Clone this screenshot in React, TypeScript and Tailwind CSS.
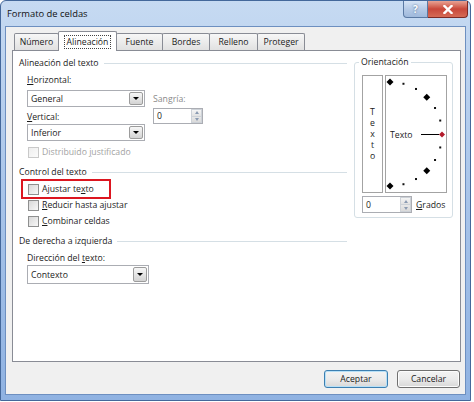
import type { ReactNode } from "react";

type TabProps = { label: string; className: string; active?: boolean };

function Tab({ label, className, active }: TabProps) {
  if (active) {
    return (
      <div
        className={`relative z-10 -mb-px -ml-px flex h-[20px] items-center justify-center rounded-t-[2px] border border-b-0 border-[#898c95] bg-white ${className}`}
      >
        <span className="border border-dotted border-[#444] px-[2px] leading-[12px]">{label}</span>
      </div>
    );
  }
  return (
    <div
      className={`-ml-px flex h-[17px] items-center justify-center rounded-t-[2px] border border-b-0 border-[#898c95] bg-gradient-to-b from-[#f7f7f7] to-[#e1e1e1] first:ml-0 ${className}`}
    >
      {label}
    </div>
  );
}

function Section({ title }: { title: string }) {
  return (
    <div className="flex h-[12px] items-center">
      <span className="whitespace-nowrap">{title}</span>
      <div className="ml-[5px] h-px flex-1 bg-[#d5dfe5]" />
    </div>
  );
}

function Select({ value, className }: { value: string; className: string }) {
  return (
    <div className={`flex border border-[#abadb3] bg-white p-px ${className}`}>
      <span className="flex flex-1 items-center pl-[2px]">{value}</span>
      <div className="flex w-[14px] items-center justify-center rounded-[2px] border border-[#9c9c9c] bg-gradient-to-b from-[#f7f7f7] to-[#d3d3d3]">
        <div className="h-0 w-0 border-x-[3px] border-t-[3px] border-x-transparent border-t-black" />
      </div>
    </div>
  );
}

function Spinner({ className }: { className: string }) {
  return (
    <div className={`flex border border-[#abadb3] bg-white ${className}`}>
      <span className="flex flex-1 items-center pl-[3px]">0</span>
      <div className="flex w-[11px] flex-col">
        <div className="flex flex-1 items-center justify-center border border-b-0 border-[#cdd2d8] bg-gradient-to-b from-[#f5f5f5] to-[#e2e2e2]">
          <div className="h-0 w-0 border-x-[2.5px] border-b-[3px] border-x-transparent border-b-[#8b9bb2]" />
        </div>
        <div className="flex flex-1 items-center justify-center border border-[#cdd2d8] bg-gradient-to-b from-[#e8e8e8] to-[#dadada]">
          <div className="h-0 w-0 border-x-[2.5px] border-t-[3px] border-x-transparent border-t-[#8b9bb2]" />
        </div>
      </div>
    </div>
  );
}

function Check({ children, disabled, className = "" }: { children: ReactNode; disabled?: boolean; className?: string }) {
  return (
    <div className={`ml-[9px] flex h-[12px] items-center gap-[3px] ${className}`}>
      <div
        className={
          disabled
            ? "h-[11px] w-[11px] border border-[#c9c9c9] bg-gradient-to-br from-[#eeeeee] to-[#fbfbfb]"
            : "h-[11px] w-[11px] border border-[#8e8f8f] bg-gradient-to-br from-[#d8d8d8] to-[#f8f8f8]"
        }
      />
      <span className={disabled ? "text-[#a3a3a3]" : ""}>{children}</span>
    </div>
  );
}

function Dial() {
  const cx = 4;
  const cy = 58;
  const r = 52;
  const small = [-75, -60, -30, -15, 15, 30, 60, 75];
  const big = [-90, -45, 45, 90];
  const pt = (a: number) => {
    const rad = (a * Math.PI) / 180;
    return { x: cx + r * Math.cos(rad), y: cy - r * Math.sin(rad) };
  };
  const diamond = (x: number, y: number, s: number) =>
    `${x},${y - s} ${x + s},${y} ${x},${y + s} ${x - s},${y}`;
  return (
    <svg width="60" height="116" viewBox="0 0 60 116">
      {small.map((a) => {
        const p = pt(a);
        return <rect key={a} x={p.x - 1} y={p.y - 1} width="2" height="2" fill="#111" />;
      })}
      {big.map((a) => {
        const p = pt(a);
        return <polygon key={a} points={diamond(p.x, p.y, 3.5)} fill="#000" />;
      })}
      <text x="4" y="61.5" fontSize="8.7" fontFamily="'Open Sans', sans-serif" fill="#1b1b1b">
        Texto
      </text>
      <line x1="35" y1="58.5" x2="53" y2="58.5" stroke="#000" strokeWidth="1" />
      <polygon points={diamond(56, 58.5, 3)} fill="#b31b2c" />
    </svg>
  );
}

export default function App() {
  return (
    <div className="h-[402px] w-[474px] bg-white">
      <div className="flex h-[401px] w-[471px] flex-col rounded-t-[6px] border border-[#44689b] bg-gradient-to-b from-[#c6daf2] via-[#a8c4e9] to-[#8fb2e2] font-['Open_Sans',sans-serif] text-[8.7px] leading-[12px] text-[#1b1b1b]">
        {/* title bar */}
        <div className="flex h-[25px] items-start justify-between">
          <span className="ml-[6px] mt-[7px] text-[9.4px] leading-[12px] text-[#111]">Formato de celdas</span>
          <div className="mr-[2px] flex">
            <div className="flex h-[17px] w-[25px] items-center justify-center rounded-bl-[4px] border border-t-0 border-[#5a79a3] bg-gradient-to-b from-[#d6e4f5] via-[#b5cae6] to-[#9fb9dc] text-[10px] font-bold leading-none text-white [text-shadow:0_0_2px_#3d5a82]">
              ?
            </div>
            <div className="flex h-[17px] w-[40px] items-center justify-center rounded-br-[4px] border border-l-0 border-t-0 border-[#7b2a25] bg-gradient-to-b from-[#e7a294] via-[#c8473a] to-[#d56a55]">
              <svg width="10" height="9" viewBox="0 0 10 9">
                <path d="M1.5 1 L8.5 8 M8.5 1 L1.5 8" stroke="#fff" strokeWidth="2.4" strokeLinecap="square" />
              </svg>
            </div>
          </div>
        </div>

        {/* client area */}
        <div className="mx-[4px] flex h-[369px] flex-col border border-[#6d8fc0] bg-[#f0f0f0] pl-[6px] pr-[4px] pt-[4px]">
          <div className="ml-[2px] flex h-[19px] items-end">
            <Tab label="Número" className="w-[45px]" />
            <Tab label="Alineación" className="w-[59px]" active />
            <Tab label="Fuente" className="w-[47px]" />
            <Tab label="Bordes" className="w-[48px]" />
            <Tab label="Relleno" className="w-[49px]" />
            <Tab label="Proteger" className="w-[48px]" />
          </div>

          <div className="relative flex h-[312px] border border-[#898c95] bg-white">
            {/* left column */}
            <div className="flex w-[341px] flex-col pl-[6px] pr-[7px] pt-[6px]">
              <Section title="Alineación del texto" />
              <div className="ml-[8px] mt-[5px] flex">
                <div className="flex w-[118px] flex-col">
                  <span className="h-[12px]">
                    <u>H</u>orizontal:
                  </span>
                  <Select value="General" className="mt-[4px] h-[17px] w-[118px]" />
                  <span className="mt-[4px] h-[12px]">
                    <u>V</u>ertical:
                  </span>
                  <Select value="Inferior" className="mt-[1px] h-[17px] w-[118px]" />
                </div>
                <div className="ml-[8px] flex flex-col">
                  <span className="mt-[19px] h-[12px] text-[#8a8a8a]">Sangría:</span>
                  <Spinner className="mt-[3px] h-[16px] w-[50px]" />
                </div>
              </div>
              <Check disabled className="mt-[5px]">
                Distribuido <u>j</u>ustificado
              </Check>

              <div className="mt-[8px]">
                <Section title="Control del texto" />
              </div>
              <Check className="mt-[5px]">
                Ajustar te<u>x</u>to
              </Check>
              <Check className="mt-[4px]">
                <u>R</u>educir hasta ajustar
              </Check>
              <Check className="mt-[4px]">
                <u>C</u>ombinar celdas
              </Check>

              <div className="mt-[8px]">
                <Section title="De derecha a izquierda" />
              </div>
              <span className="ml-[8px] mt-[5px] h-[12px]">
                Dirección del <u>t</u>exto:
              </span>
              <Select value="Contexto" className="ml-[8px] mt-[1px] h-[19px] w-[122px]" />
            </div>

            {/* orientation group */}
            <div className="mt-[11px] flex h-[156px] w-[99px] flex-col rounded-[3px] border border-[#d5dfe5] pl-[7px]">
              <span className="-mt-[7px] ml-[-3px] block w-fit bg-white px-[2px]">Orientación</span>
              <div className="mt-[7px] flex gap-[2px]">
                <div className="flex h-[118px] w-[21px] flex-col items-center justify-center border border-[#a3a3a3] leading-[11px]">
                  <span>T</span>
                  <span>e</span>
                  <span>x</span>
                  <span>t</span>
                  <span>o</span>
                </div>
                <div className="h-[118px] w-[62px] border border-[#a3a3a3]">
                  <Dial />
                </div>
              </div>
              <div className="mt-[3px] flex items-center">
                <Spinner className="h-[17px] w-[50px]" />
                <span className="ml-[4px]">
                  <u>G</u>rados
                </span>
              </div>
            </div>

            {/* highlight annotation */}
            <div className="pointer-events-none absolute left-[8px] top-[128px] h-[20px] w-[90px] border-2 border-[#dc1620]" />
          </div>

          <div className="mt-[8px] flex justify-end gap-[9px] pr-px">
            <button
              type="button"
              className="h-[18px] w-[64px] rounded-[3px] border border-[#3c7fb1] bg-gradient-to-b from-[#f3f3f3] via-[#ebebeb] to-[#d8d8d8] leading-[14px] shadow-[inset_0_0_0_1px_#b7e0f7]"
            >
              Aceptar
            </button>
            <button
              type="button"
              className="h-[18px] w-[63px] rounded-[3px] border border-[#707070] bg-gradient-to-b from-[#f3f3f3] via-[#ebebeb] to-[#d8d8d8] leading-[14px] shadow-[inset_0_0_0_1px_#fcfcfc]"
            >
              Cancelar
            </button>
          </div>
        </div>
      </div>
    </div>
  );
}
